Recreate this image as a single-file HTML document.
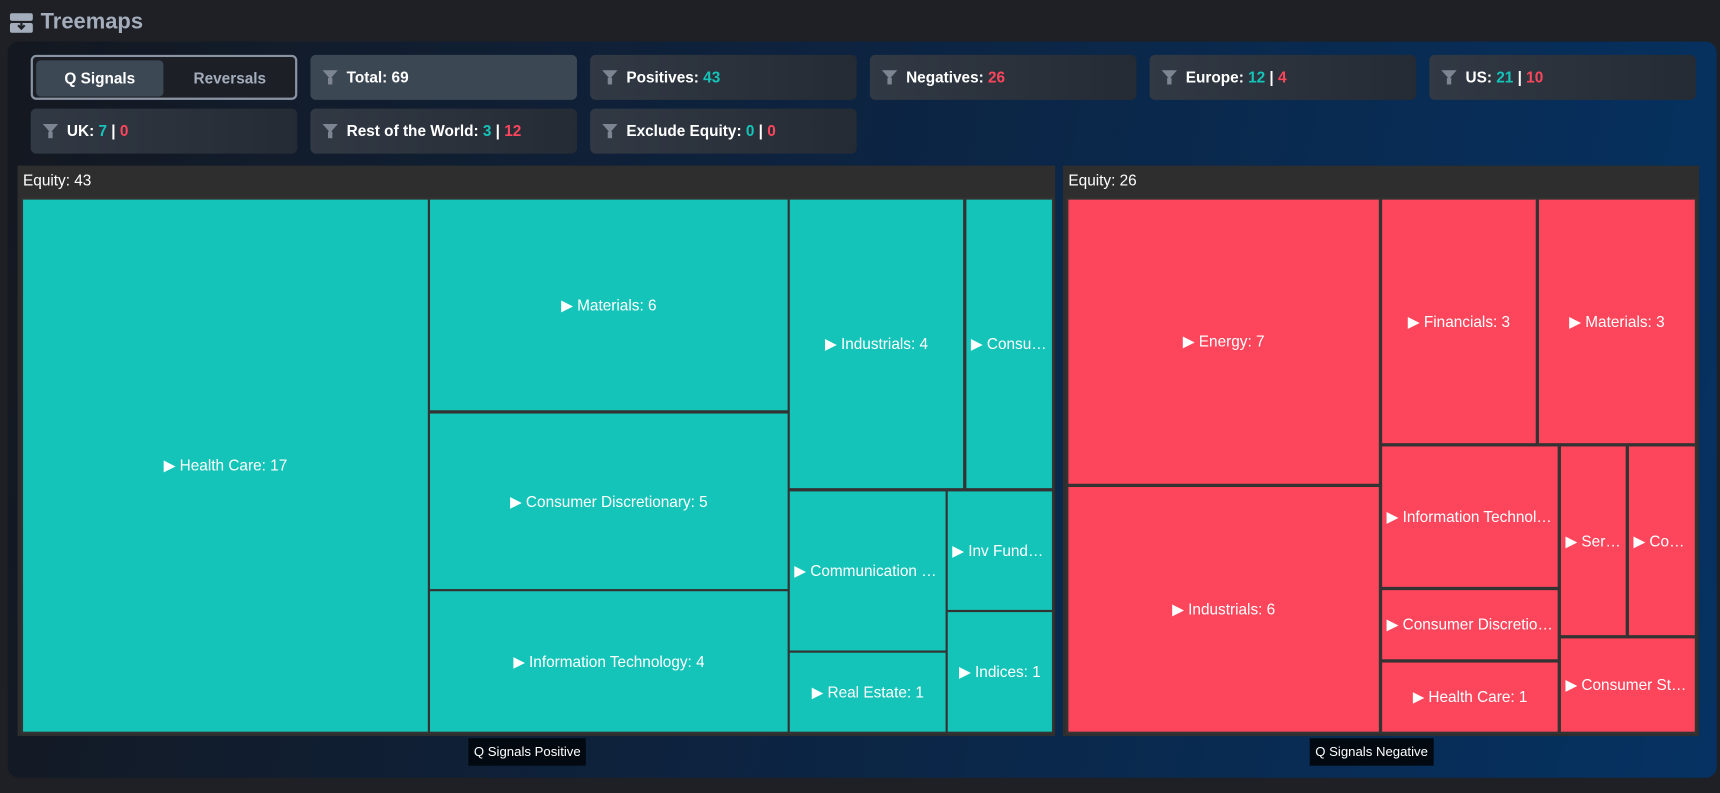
<!DOCTYPE html>
<html><head><meta charset="utf-8"><style>
*{box-sizing:border-box;margin:0;padding:0}
html,body{width:1720px;height:793px;overflow:hidden;background:#1e2025}
#w{position:absolute;left:0;top:0;width:1568px;height:723px;transform:scale(1.09694);transform-origin:0 0;font-family:"Liberation Sans",sans-serif}
.title{position:absolute;left:37px;top:9px;font-size:20px;font-weight:bold;color:#a3adbb}
.panel{position:absolute;left:7px;top:38px;width:1558px;height:671px;border-radius:10px;background:linear-gradient(100deg,#141820 0%,#0d2340 45%,#053262 100%)}
.btn{position:absolute;width:243px;height:41px;border-radius:5px;background:linear-gradient(90deg,#313944,#252b34);color:#fff;font-weight:bold;font-size:14px;line-height:41px;padding-left:33px;white-space:nowrap}
.btn .f{position:absolute;left:11px;top:14px;width:0;height:0;border-left:7px solid transparent;border-right:7px solid transparent;border-top:8px solid #7c8591}
.btn .f:after{content:"";position:absolute;left:-2px;top:-1px;width:4px;height:6px;background:#7c8591}
.g{color:#14c4b9}.r{color:#fd465c}
.tog{position:absolute;left:28px;top:50px;width:243px;height:41px;border:2px solid #8a94a3;border-radius:5px;background:#1c1f26}
.tog div{position:absolute;top:3px;height:33px;line-height:33px;text-align:center;font-size:14px;font-weight:bold;border-radius:4px}
.tm{position:absolute;background:#333}
.hd{position:absolute;color:#fff;font-size:14px}
.t{position:absolute;color:#fff;font-size:14px;display:flex;align-items:center;justify-content:center;overflow:hidden;white-space:nowrap;padding:0 4px}
.t span{overflow:hidden;text-overflow:ellipsis}
.p{background:#14c4b9}.n{background:#fd465c}
.lab{position:absolute;top:673px;height:25px;line-height:25px;background:#020910;color:#fff;font-size:12px;padding:0 5px}
</style></head><body><div id="w">
<svg style="position:absolute;left:9px;top:12px" width="21" height="18" viewBox="0 0 21 18"><rect x="0" y="0" width="21" height="7" rx="2" fill="#a3adbb"/><rect x="0" y="9" width="21" height="9" rx="2" fill="#a3adbb"/><path d="M10.5 8v6M7.5 11l3 3 3-3" stroke="#1e2025" stroke-width="2" fill="none"/></svg>
<div class="title">Treemaps</div>
<div class="panel"></div>
<div class="tog"><div style="left:3px;width:116px;background:#3d4855;color:#fff">Q Signals</div><div style="left:121px;width:117px;color:#a3adbb">Reversals</div></div>
<div class="btn" style="left:283px;top:50px;background:#3c4754"><i class="f"></i>Total: 69</div>
<div class="btn" style="left:538px;top:50px"><i class="f"></i>Positives: <span class="g">43</span></div>
<div class="btn" style="left:793px;top:50px"><i class="f"></i>Negatives: <span class="r">26</span></div>
<div class="btn" style="left:1048px;top:50px"><i class="f"></i>Europe: <span class="g">12</span> | <span class="r">4</span></div>
<div class="btn" style="left:1303px;top:50px"><i class="f"></i>US: <span class="g">21</span> | <span class="r">10</span></div>
<div class="btn" style="left:28px;top:99px"><i class="f"></i>UK: <span class="g">7</span> | <span class="r">0</span></div>
<div class="btn" style="left:283px;top:99px"><i class="f"></i>Rest of the World: <span class="g">3</span> | <span class="r">12</span></div>
<div class="btn" style="left:538px;top:99px"><i class="f"></i>Exclude Equity: <span class="g">0</span> | <span class="r">0</span></div>

<div class="tm" style="left:16px;top:151px;width:946px;height:520px;background:#2e2e2e"></div>
<div class="hd" style="left:21px;top:156px">Equity: 43</div>
<div class="tm" style="left:969px;top:151px;width:580px;height:520px;background:#2e2e2e"></div>
<div class="hd" style="left:974px;top:156px">Equity: 26</div>

<div class="tm" style="left:19px;top:180px;width:942px;height:489px"></div>
<div class="tm" style="left:972px;top:180px;width:575px;height:489px"></div>

<div class="t p" style="left:21px;top:182px;width:369px;height:485px"><span>▶ Health Care: 17</span></div>
<div class="t p" style="left:392px;top:182px;width:326px;height:192px"><span>▶ Materials: 6</span></div>
<div class="t p" style="left:392px;top:377px;width:326px;height:160px"><span>▶ Consumer Discretionary: 5</span></div>
<div class="t p" style="left:392px;top:539px;width:326px;height:128px"><span>▶ Information Technology: 4</span></div>
<div class="t p" style="left:720px;top:182px;width:158px;height:263px"><span>▶ Industrials: 4</span></div>
<div class="t p" style="left:881px;top:182px;width:78px;height:263px"><span>▶ Consumer Staples: 3</span></div>
<div class="t p" style="left:720px;top:448px;width:142px;height:145px"><span>▶ Communication Services: 2</span></div>
<div class="t p" style="left:720px;top:595px;width:142px;height:72px"><span>▶ Real Estate: 1</span></div>
<div class="t p" style="left:864px;top:448px;width:95px;height:108px"><span>▶ Inv Funds: 1</span></div>
<div class="t p" style="left:864px;top:558px;width:95px;height:109px"><span>▶ Indices: 1</span></div>

<div class="t n" style="left:974px;top:182px;width:283px;height:259px"><span>▶ Energy: 7</span></div>
<div class="t n" style="left:974px;top:444px;width:283px;height:223px"><span>▶ Industrials: 6</span></div>
<div class="t n" style="left:1260px;top:182px;width:140px;height:222px"><span>▶ Financials: 3</span></div>
<div class="t n" style="left:1403px;top:182px;width:142px;height:222px"><span>▶ Materials: 3</span></div>
<div class="t n" style="left:1260px;top:407px;width:160px;height:128px"><span>▶ Information Technology: 2</span></div>
<div class="t n" style="left:1260px;top:538px;width:160px;height:63px"><span>▶ Consumer Discretionary: 1</span></div>
<div class="t n" style="left:1260px;top:604px;width:160px;height:63px"><span>▶ Health Care: 1</span></div>
<div class="t n" style="left:1423px;top:407px;width:59px;height:172px"><span>▶ Services: 1</span></div>
<div class="t n" style="left:1485px;top:407px;width:60px;height:172px"><span>▶ Comm: 1</span></div>
<div class="t n" style="left:1423px;top:582px;width:122px;height:85px"><span>▶ Consumer Staples: 1</span></div>

<div class="lab" style="left:427px">Q Signals Positive</div>
<div class="lab" style="left:1194px">Q Signals Negative</div>
</div></body></html>
